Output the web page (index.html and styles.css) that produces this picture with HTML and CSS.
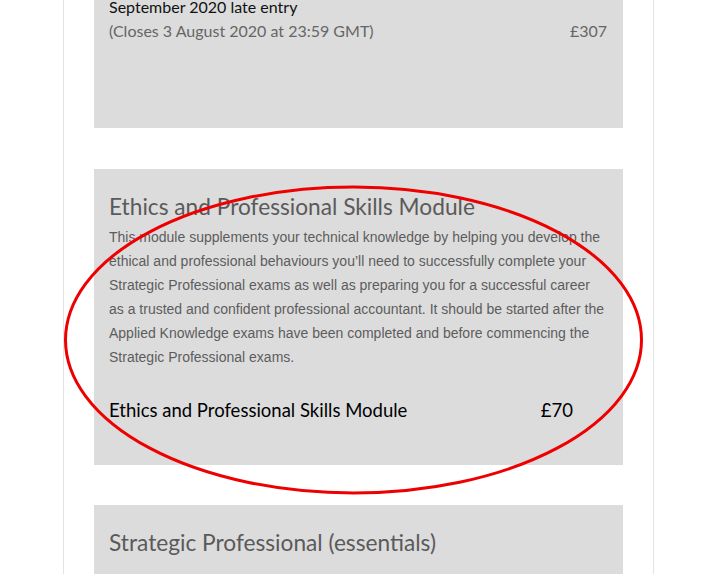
FILE: index.html
```html
<!DOCTYPE html>
<html lang="en">
<head>
<meta charset="utf-8">
<title>Exam fees</title>
<link rel="stylesheet" href="styles.css">
</head>
<body>
<div class="page">
  <section class="card card-first">
    <div class="row">
      <span class="entry-title">September 2020 late entry</span>
    </div>
    <div class="row">
      <span class="closes">(Closes 3 August 2020 at 23:59 GMT)</span>
      <span class="price-grey">£307</span>
    </div>
  </section>

  <section class="card card-module">
    <h2 class="card-heading">Ethics and Professional Skills Module</h2>
    <p class="card-text">This module supplements your technical knowledge by helping you develop the ethical and professional behaviours you’ll need to successfully complete your Strategic Professional exams as well as preparing you for a successful career as a trusted and confident professional accountant. It should be started after the Applied Knowledge exams have been completed and before commencing the Strategic Professional exams.</p>
    <div class="row fee-row">
      <span class="fee-name">Ethics and Professional Skills Module</span>
      <span class="fee-price">£70</span>
    </div>
  </section>

  <section class="card card-last">
    <h2 class="card-heading">Strategic Professional (essentials)</h2>
  </section>

  <svg class="highlight" width="583" height="312" viewBox="0 0 583 312" aria-hidden="true">
    <ellipse cx="291.5" cy="156" rx="288" ry="153" fill="none" stroke="#ee0000" stroke-width="3"/>
  </svg>
</div>
</body>
</html>
```

FILE: styles.css
```css
*, *::before, *::after {
  box-sizing: border-box;
}

html, body {
  margin: 0;
  padding: 0;
  background: #ffffff;
}

body {
  font-family: "Lato", "Liberation Sans", sans-serif;
  overflow: hidden;
  height: 574px;
}

.page {
  position: relative;
  width: 591px;
  margin: 0 0 0 63px;
  border-left: 1px solid #e3e3e3;
  border-right: 1px solid #e3e3e3;
  padding: 0 30px 40px;
  min-height: 620px;
  display: flex;
  flex-direction: column;
  gap: 40px;
}

.card {
  background: #dcdcdc;
  padding: 24px 16px 44px 15px;
}

.card-first {
  margin-top: -5px;
  padding-top: 0;
  padding-bottom: 85px;
  margin-bottom: 1px;
}

.row {
  display: flex;
  justify-content: space-between;
  align-items: center;
}

.entry-title {
  font-size: 16px;
  line-height: 24px;
  color: #111;
}

.closes {
  font-size: 16px;
  line-height: 24px;
  color: #666;
}

.price-grey {
  font-size: 16px;
  line-height: 24px;
  color: #666;
}

.card-heading {
  margin: 0;
  font-weight: 400;
  font-size: 22.7px;
  line-height: 28px;
  color: #5a5a5a;
}

.card-text {
  margin: 4px 0 0;
  font-family: "Liberation Sans", Arial, sans-serif;
  font-size: 14px;
  line-height: 24px;
  color: #5c5c5c;
}

.fee-row {
  margin-top: 30px;
  padding-right: 34px;
}

.fee-name, .fee-price {
  font-size: 18.5px;
  line-height: 22px;
  color: #000;
}

.card-last {
  padding-bottom: 60px;
}

.highlight {
  position: absolute;
  left: -2px;
  top: 184px;
  pointer-events: none;
}
```
